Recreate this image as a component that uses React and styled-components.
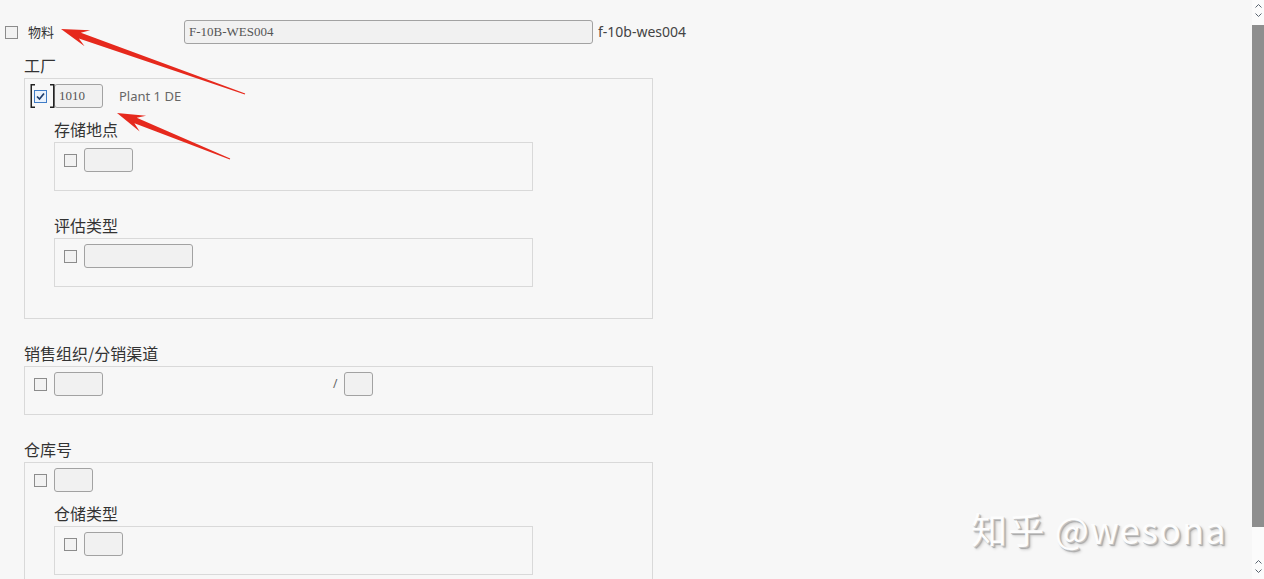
import React from "react";
import styled, { createGlobalStyle } from "styled-components";

const Global = createGlobalStyle`
  html, body { margin: 0; padding: 0; height: 579px; overflow: hidden; background: #f7f7f7; }
  body { font-family: "Noto Sans", "Noto Sans CJK SC", sans-serif; }
`;

const CJK = `"Noto Sans CJK SC", "Noto Sans", sans-serif`;

const Page = styled.div`
  position: relative;
  display: flex;
  height: 579px;
  overflow: hidden;
  background: #f7f7f7;
`;

const Main = styled.main`
  flex: 1;
  display: flex;
  flex-direction: column;
  align-items: flex-start;
  padding: 20px 0 0 5px;
  min-width: 0;
`;

const TopRow = styled.div`
  display: flex;
  align-items: center;
  height: 24px;
`;

const TopLabel = styled.span`
  width: 156px;
  margin-left: 10px;
  font-family: ${CJK};
  font-size: 13px;
  color: #333;
  line-height: 24px;
`;

const Checkbox = styled.span`
  flex: none;
  display: inline-flex;
  align-items: center;
  justify-content: center;
  width: 13px;
  height: 13px;
  box-sizing: border-box;
  border: 1px solid ${(p) => (p.$checked ? "#3f7cc6" : "#8c8c8c")};
  background: ${(p) => (p.$checked ? "#eaf2fc" : "#f2f2f2")};
`;

const CheckWrap = styled.span`
  position: relative;
  flex: none;
  display: inline-flex;
  align-items: center;
  height: 24px;
`;

const FocusRing = styled.svg`
  position: absolute;
  left: -4px;
  top: 0;
  width: 25px;
  height: 24px;
  pointer-events: none;
`;

const TextInput = styled.input`
  flex: none;
  box-sizing: border-box;
  width: ${(p) => p.$w}px;
  height: 24px;
  margin: 0;
  padding: 0 4px;
  border: 1px solid #a2a2a2;
  border-radius: 3px;
  background: #f1f1f1;
  font-family: "Liberation Serif", "DejaVu Serif", serif;
  font-size: 13px;
  color: #555;
  outline: none;
`;

const SideText = styled.span`
  margin-left: ${(p) => p.$ml || 0}px;
  font-family: "Noto Sans", sans-serif;
  font-size: ${(p) => p.$size || 13}px;
  color: ${(p) => p.$color || "#666"};
  line-height: 24px;
  white-space: nowrap;
`;

const Section = styled.section`
  margin-top: 11px;
  margin-left: ${(p) => p.$indent}px;
  width: ${(p) => p.$width}px;
  display: flex;
  flex-direction: column;
`;

const SectionLabel = styled.div`
  font-family: ${CJK};
  font-size: 16px;
  line-height: 20px;
  height: 20px;
  margin-bottom: 3px;
  color: #333;
`;

const Box = styled.div`
  box-sizing: border-box;
  display: flex;
  flex-direction: column;
  align-items: flex-start;
  border: 1px solid #d9d9d9;
  padding: 5px 9px 18px;
  margin-bottom: 13px;
`;

const FieldRow = styled.div`
  display: flex;
  align-items: center;
  gap: 7px;
  height: 24px;
`;

const Slash = styled.span`
  margin-left: 223px;
  font-family: "Noto Sans", sans-serif;
  font-size: 12px;
  color: #666;
  line-height: 24px;
  width: 4px;
`;

const ScrollBar = styled.aside`
  flex: none;
  width: 12px;
  display: flex;
  flex-direction: column;
  background: #fbfbfb;
`;

const ArrowPair = styled.div`
  height: ${(p) => p.$h}px;
  display: flex;
  flex-direction: column;
  align-items: center;
  justify-content: ${(p) => (p.$end ? "flex-end" : "flex-start")};
  padding: ${(p) => (p.$end ? "0 0 6px" : "4px 0 0")};
  box-sizing: border-box;
  gap: 5px;
`;

const Thumb = styled.div`
  height: 502px;
  background: #8e8e8e;
`;

const Track = styled.div`
  flex: 1;
`;

const Overlay = styled.svg`
  position: absolute;
  left: 0;
  top: 0;
  width: 1252px;
  height: 579px;
  pointer-events: none;
`;

const Watermark = styled.div`
  position: absolute;
  left: 971px;
  top: 504px;
  font-family: "Noto Sans CJK SC", "Noto Sans", sans-serif;
  font-size: 36px;
  font-weight: 400;
  line-height: 48px;
  color: #fdfdfd;
  letter-spacing: 1.2px;
  text-shadow: 1px 1px 0 #c4c4c4, 2px 2px 1px #a8a8a8, 3px 3px 3px rgba(0,0,0,0.15);
  pointer-events: none;
  white-space: nowrap;
`;

const Chevron = ({ up }) => (
  <svg width="7" height="4" viewBox="0 0 7 4">
    <polyline
      points={up ? "0.5,3.5 3.5,0.5 6.5,3.5" : "0.5,0.5 3.5,3.5 6.5,0.5"}
      fill="none"
      stroke="#5a6470"
      strokeWidth="1"
    />
  </svg>
);

function arrowPoints(tx, ty, px, py) {
  const dx = px - tx;
  const dy = py - ty;
  const len = Math.hypot(dx, dy);
  const ux = dx / len;
  const uy = dy / len;
  const nx = -uy;
  const ny = ux;
  const H = 26;
  const W = 8.5;
  const neck = 3;
  const tw = 0.5;
  const pt = (d, w) => `${(px - ux * d + nx * w).toFixed(1)},${(py - uy * d + ny * w).toFixed(1)}`;
  return [
    `${(tx + nx * tw).toFixed(1)},${(ty + ny * tw).toFixed(1)}`,
    pt(H - 6, neck),
    pt(H + 2, W),
    `${px},${py}`,
    pt(H + 2, -W),
    pt(H - 6, -neck),
    `${(tx - nx * tw).toFixed(1)},${(ty - ny * tw).toFixed(1)}`,
  ].join(" ");
}

const CheckMark = () => (
  <svg width="11" height="11" viewBox="0 0 11 11">
    <polyline points="2,5.5 4.5,8 9,2.5" fill="none" stroke="#1d3d6c" strokeWidth="1.7" />
  </svg>
);

const Field = ({ w }) => (
  <FieldRow>
    <Checkbox />
    <TextInput readOnly $w={w} value="" />
  </FieldRow>
);

export default function App() {
  return (
    <Page>
      <Global />
      <Main>
        <TopRow>
          <Checkbox />
          <TopLabel>物料</TopLabel>
          <TextInput readOnly $w={409} value="F-10B-WES004" />
          <SideText $ml={5} $size={14} $color="#444">f-10b-wes004</SideText>
        </TopRow>

        <Section $indent={19} $width={629}>
          <SectionLabel>工厂</SectionLabel>
          <Box>
            <FieldRow>
              <CheckWrap>
                <Checkbox $checked>
                  <CheckMark />
                </Checkbox>
                <FocusRing viewBox="0 0 25 24">
                  <path d="M5 0.75 H1.25 V23.25 H5 M20 0.75 H23.75 V23.25 H20" fill="none" stroke="#222" strokeWidth="1.5" />
                </FocusRing>
              </CheckWrap>
              <TextInput readOnly $w={49} value="1010" />
              <SideText $ml={9}>Plant 1 DE</SideText>
            </FieldRow>

            <Section $indent={20} $width={479}>
              <SectionLabel>存储地点</SectionLabel>
              <Box>
                <Field w={49} />
              </Box>
            </Section>

            <Section $indent={20} $width={479}>
              <SectionLabel>评估类型</SectionLabel>
              <Box>
                <Field w={109} />
              </Box>
            </Section>
          </Box>
        </Section>

        <Section $indent={19} $width={629}>
          <SectionLabel>销售组织/分销渠道</SectionLabel>
          <Box>
            <FieldRow>
              <Checkbox />
              <TextInput readOnly $w={49} value="" />
              <Slash>/</Slash>
              <TextInput readOnly $w={29} value="" />
            </FieldRow>
          </Box>
        </Section>

        <Section $indent={19} $width={629}>
          <SectionLabel>仓库号</SectionLabel>
          <Box>
            <Field w={39} />
            <Section $indent={20} $width={479}>
              <SectionLabel>仓储类型</SectionLabel>
              <Box>
                <Field w={39} />
              </Box>
            </Section>
          </Box>
        </Section>
      </Main>

      <ScrollBar>
        <ArrowPair $h={25}>
          <Chevron up />
          <Chevron />
        </ArrowPair>
        <Thumb />
        <Track />
        <ArrowPair $h={30} $end>
          <Chevron up />
          <Chevron />
        </ArrowPair>
      </ScrollBar>

      <Overlay viewBox="0 0 1252 579">
        <polygon points={arrowPoints(245, 94, 61, 29)} fill="#e6291d" />
        <polygon points={arrowPoints(230, 159, 117, 113)} fill="#e6291d" />
      </Overlay>

      <Watermark>知乎 @wesona</Watermark>
    </Page>
  );
}
